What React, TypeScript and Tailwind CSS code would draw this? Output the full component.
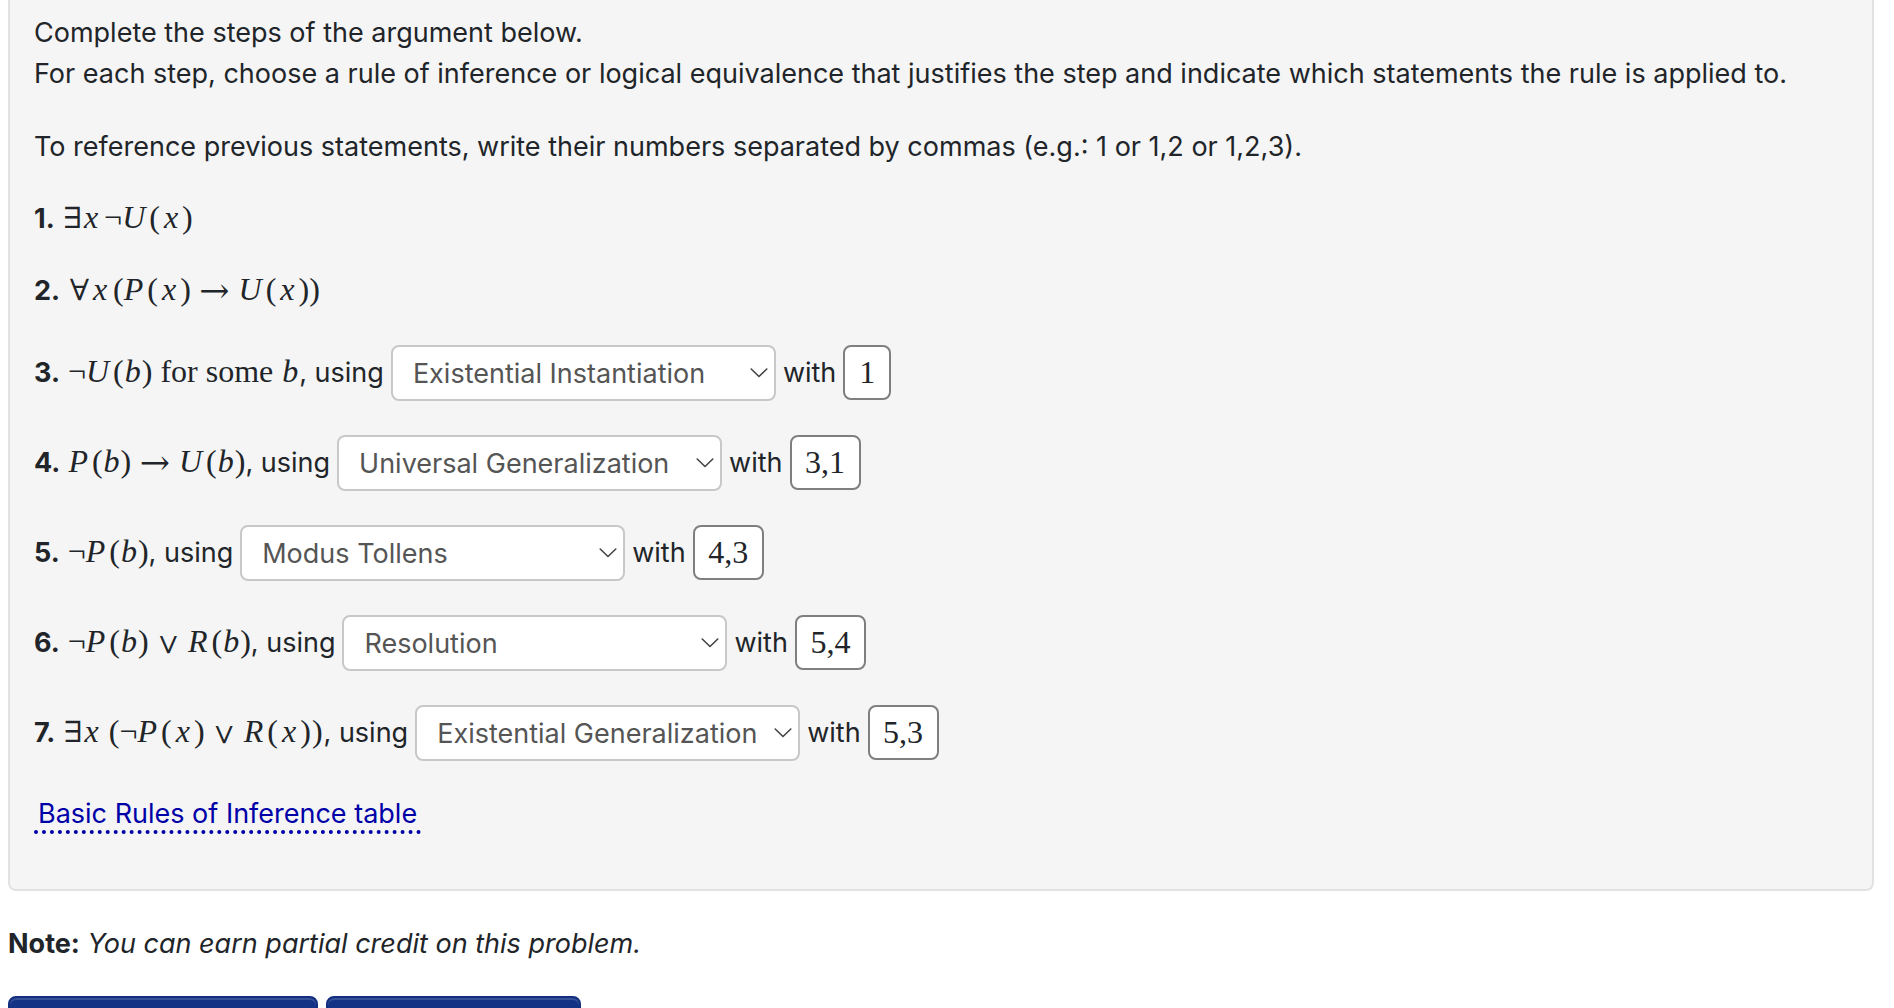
import { useState, type ReactNode } from 'react';

interface Step {
  id: number;
  statement: ReactNode;
  rule: string;
  refs: string;
}

const rules = [
  'Existential Instantiation',
  'Existential Generalization',
  'Universal Instantiation',
  'Universal Generalization',
  'Modus Ponens',
  'Modus Tollens',
  'Resolution',
];

const Math = ({ children }: { children: ReactNode }) => (
  <span className="inline-flex items-baseline whitespace-pre font-['Liberation_Serif','DejaVu_Math_TeX_Gyre',serif] text-[32px] leading-8">
    {children}
  </span>
);

const Quant = ({ children }: { children: ReactNode }) => (
  <span className="text-[29px] leading-8">
    {children}
    <i className="mx-[2px] text-[32px]">x</i>
  </span>
);

const Arrow = () => (
  <span className="mx-2 font-['DejaVu_Math_TeX_Gyre',serif]">→</span>
);

const Or = () => <span className="mx-[9px] text-[27px]">∨</span>;

const Fn = ({ name, arg }: { name: string; arg: string }) => (
  <span>
    <i className="mr-1">{name}</i>(<i className={arg === 'x' ? 'mx-1' : 'mx-px'}>{arg}</i>)
  </span>
);

const steps: Step[] = [
  {
    id: 3,
    statement: <Math>¬<Fn name="U" arg="b" /> for some <i className="mx-px">b</i></Math>,
    rule: 'Existential Instantiation',
    refs: '1',
  },
  {
    id: 4,
    statement: <Math><Fn name="P" arg="b" /><Arrow /><Fn name="U" arg="b" /></Math>,
    rule: 'Universal Generalization',
    refs: '3,1',
  },
  {
    id: 5,
    statement: <Math>¬<Fn name="P" arg="b" /></Math>,
    rule: 'Modus Tollens',
    refs: '4,3',
  },
  {
    id: 6,
    statement: <Math>¬<Fn name="P" arg="b" /><Or /><Fn name="R" arg="b" /></Math>,
    rule: 'Resolution',
    refs: '5,4',
  },
  {
    id: 7,
    statement: (
      <Math>
        <Quant>∃</Quant><span className="ml-2">(</span>¬<Fn name="P" arg="x" /><Or /><Fn name="R" arg="x" /><span className="mx-px">)</span>
      </Math>
    ),
    rule: 'Existential Generalization',
    refs: '5,3',
  },
];

const StepRow = ({ step }: { step: Step }) => {
  const [rule, setRule] = useState(step.rule);
  const [refs, setRefs] = useState(step.refs);

  return (
    <div className="flex h-[58px] items-center gap-[7px]">
      <div className="flex h-[41px] items-baseline">
        <b className="mr-2">{step.id}.</b>
        {step.statement}
        <label htmlFor={`rule-${step.id}`} className="whitespace-pre">, using</label>
      </div>
      <div className="relative self-end">
        <select
          id={`rule-${step.id}`}
          value={rule}
          onChange={(e) => setRule(e.target.value)}
          className="block h-14 w-[385px] appearance-none rounded-lg border-2 border-[#c8c8c8] bg-white pl-5 text-[27px] text-[#555]"
        >
          {rules.map((r) => (
            <option key={r}>{r}</option>
          ))}
        </select>
        <svg
          className="pointer-events-none absolute top-[22px] right-2 h-3 w-[18px]"
          viewBox="0 0 18 12"
          fill="none"
          stroke="#444"
          strokeWidth={1.6}
          strokeLinecap="round"
          strokeLinejoin="round"
        >
          <path d="M1.2 2 9 9.5 16.8 2" />
        </svg>
      </div>
      <label htmlFor={`refs-${step.id}`}>with</label>
      <input
        id={`refs-${step.id}`}
        type="text"
        value={refs}
        onChange={(e) => setRefs(e.target.value)}
        className={`h-[55px] rounded-lg border-2 border-[#7f7f7f] bg-white text-center font-['Liberation_Serif',serif] text-[32px] ${
          step.refs.length > 1 ? 'w-[71px]' : 'w-12'
        }`}
      />
    </div>
  );
};

const App = () => {
  return (
    <main className="h-screen overflow-hidden bg-white pr-5 pl-2 font-[Inter,sans-serif] text-[27px] leading-[41px] text-[#212529]">
      <section className="flex flex-col gap-8 rounded-b-lg border-2 border-t-0 border-[#e2e2e2] bg-[#f5f5f5] px-6 pt-3 pb-[55px]">
        <p>
          Complete the steps of the argument below.
          <br />
          For each step, choose a rule of inference or logical equivalence that justifies the step and indicate which statements the rule is applied to.
        </p>
        <p>To reference previous statements, write their numbers separated by commas (e.g.: 1 or 1,2 or 1,2,3).</p>
        <div className="flex h-10 items-baseline leading-10">
          <b className="mr-2">1.</b>
          <Math><Quant>∃</Quant><span className="ml-1">¬</span><Fn name="U" arg="x" /></Math>
        </div>
        <div className="flex h-10 items-baseline leading-10">
          <b className="mr-2">2.</b>
          <Math><Quant>∀</Quant><span className="ml-1">(</span><Fn name="P" arg="x" /><Arrow /><Fn name="U" arg="x" />)</Math>
        </div>
        {steps.map((step) => (
          <StepRow key={step.id} step={step} />
        ))}
        <div>
          <a href="#rules" className="border-b-4 border-dotted border-[#0000a8] px-1 text-[#0000a8]">
            Basic Rules of Inference table
          </a>
        </div>
      </section>
      <p className="my-8">
        <b>Note:</b> <i>You can earn partial credit on this problem.</i>
      </p>
      <div className="flex gap-2">
        <button
          type="button"
          aria-label="Preview My Answers"
          className="h-14 w-[310px] rounded-lg border-2 border-[#12307f] bg-[#143285] shadow-[inset_0_2px_0_#38529a]"
        />
        <button
          type="button"
          aria-label="Submit Answers"
          className="h-14 w-[255px] rounded-lg border-2 border-[#12307f] bg-[#143285] shadow-[inset_0_2px_0_#38529a]"
        />
      </div>
    </main>
  );
};

export default App;
